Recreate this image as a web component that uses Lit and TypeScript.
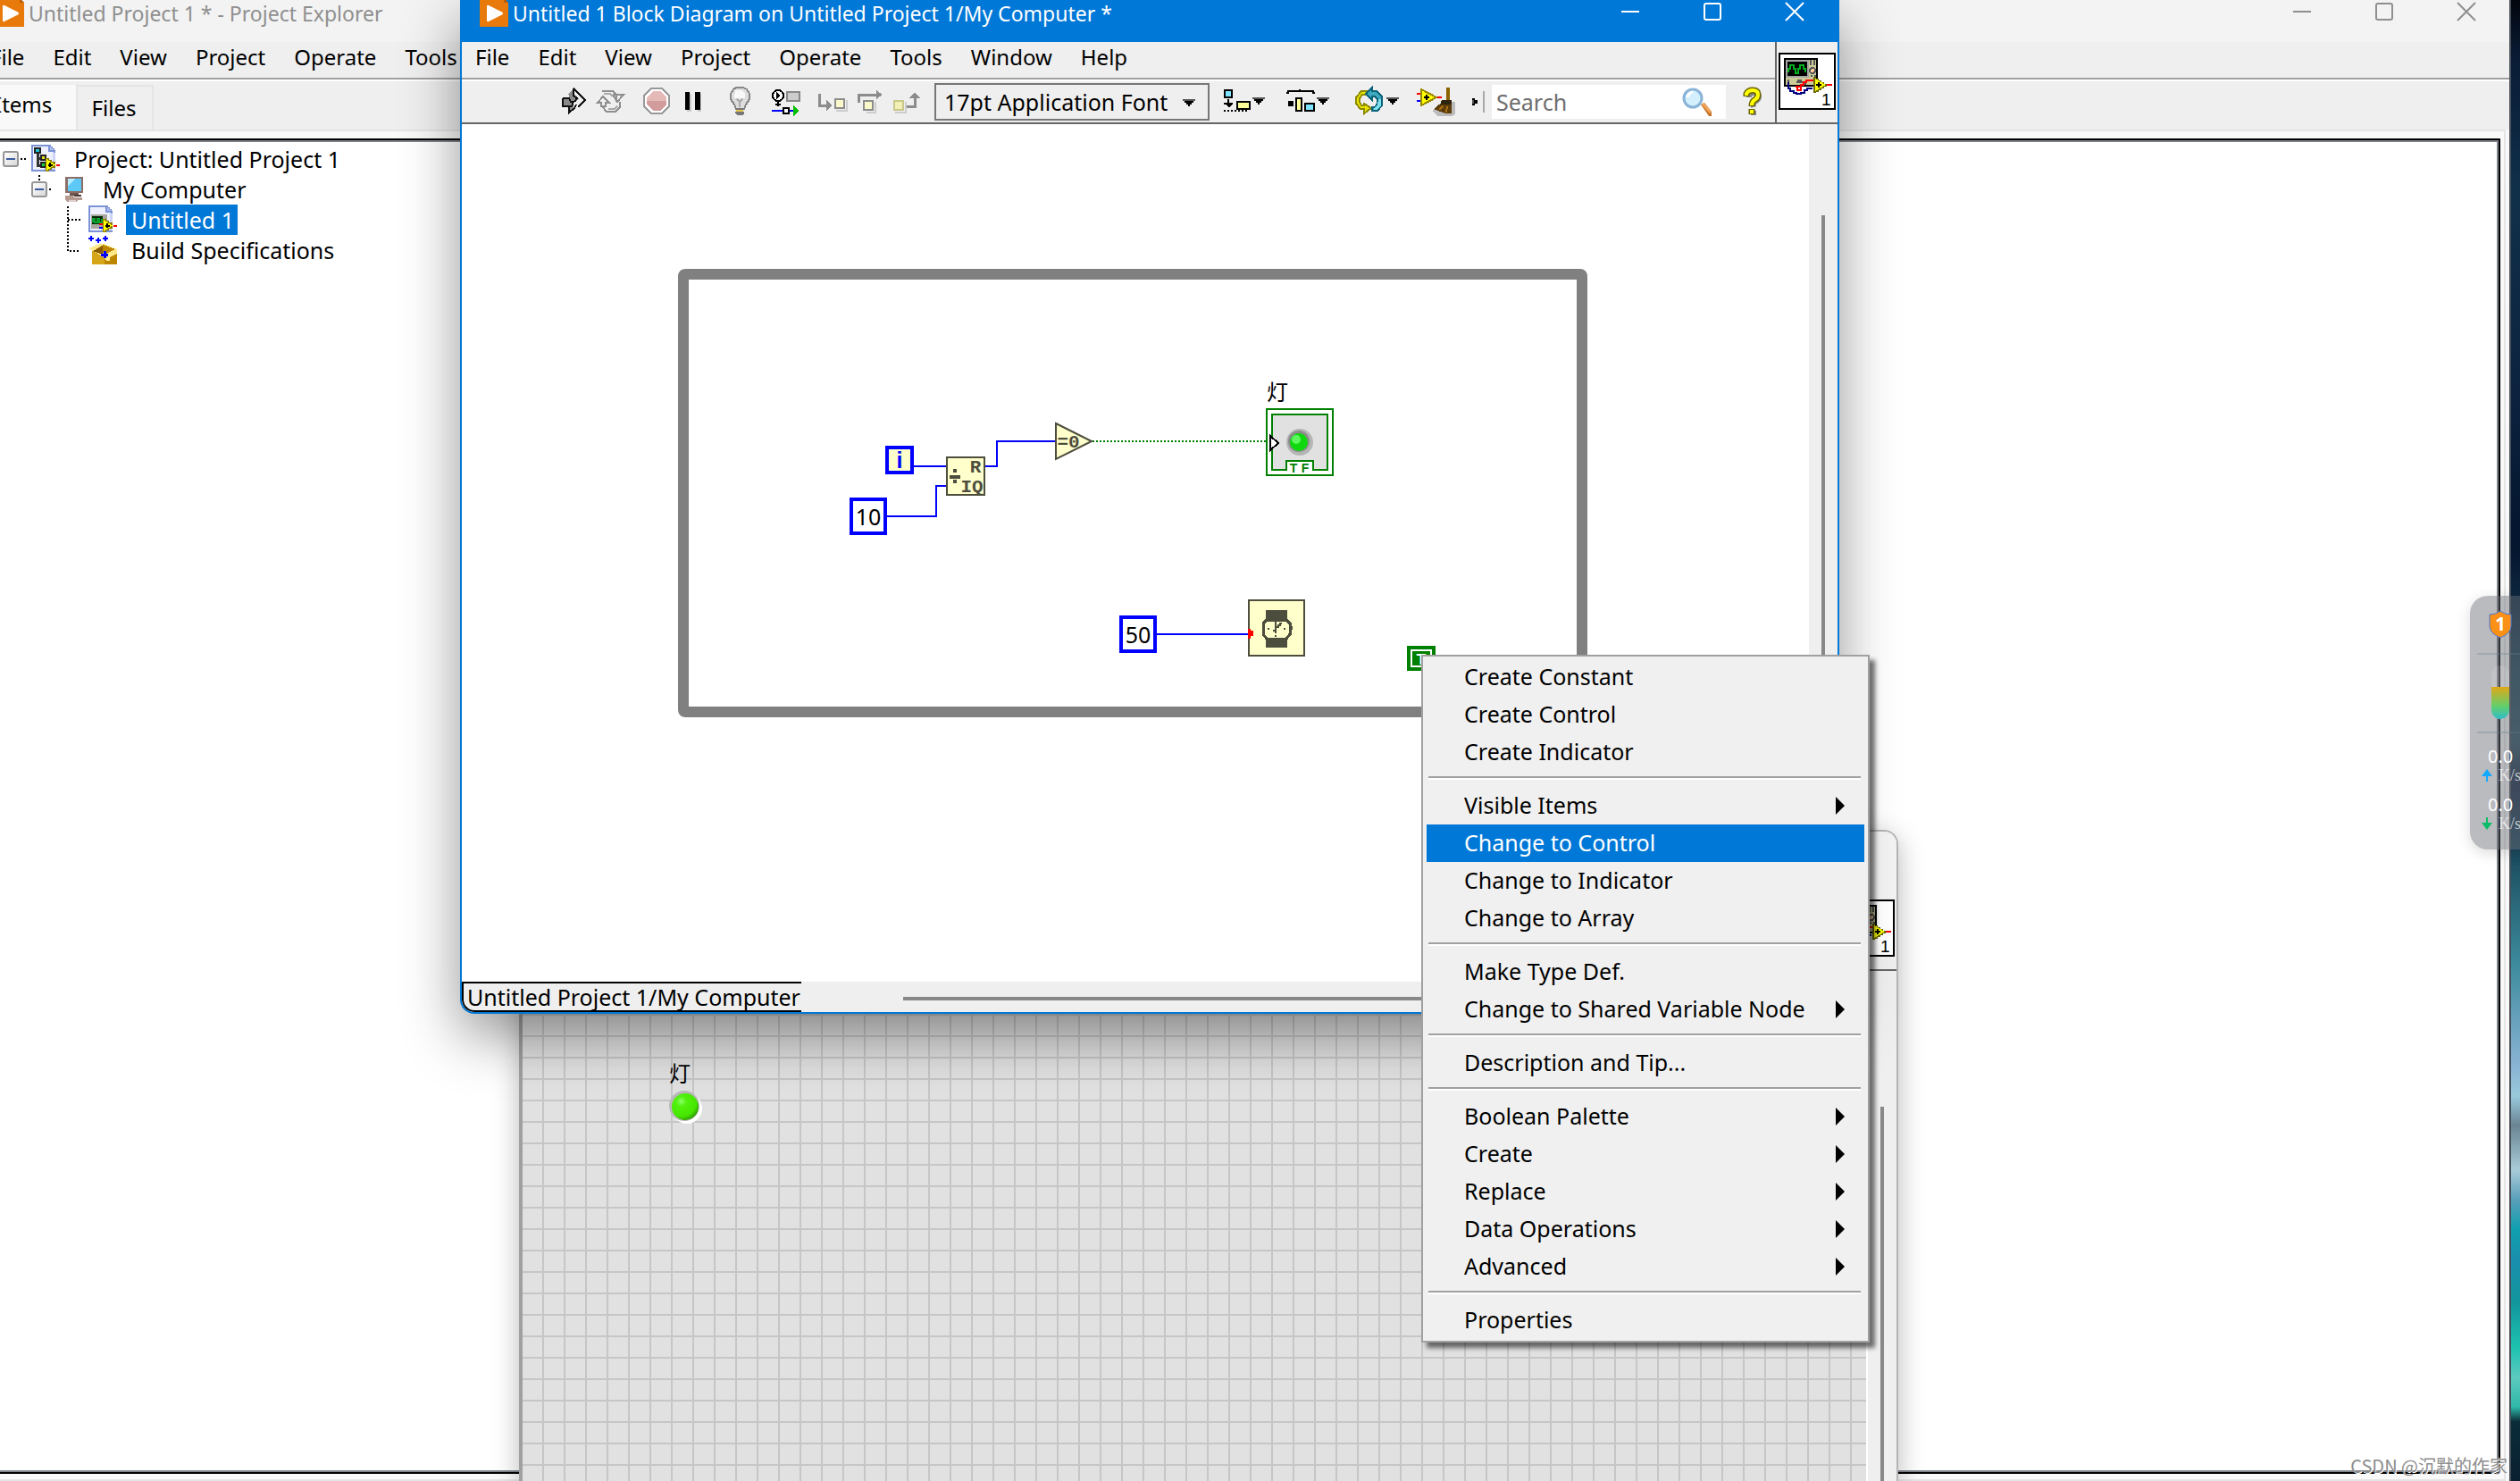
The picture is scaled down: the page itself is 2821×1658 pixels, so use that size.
import { LitElement, html, svg, css, nothing } from "lit";
import { customElement, property } from "lit/decorators.js";

const lvLogo = html`<svg class="logo" width="32" height="32" viewBox="0 0 32 32" aria-hidden="true">
  <path d="M0 0H27L32 5V32H0Z" fill="#e8790b" />
  <path d="M27 0L32 5H27Z" fill="#b85c05" />
  <path d="M8 9Q8 7 10 8L25 15.5Q27 17 25 18.5L10 26Q8 27 8 25Z" fill="#fff" />
</svg>`;

const amp = (x: number, y: number) => svg`
  <path d="M${x} ${y}h3v1.500h3v2h3v2h3v2h3v3h-3v2h-3v2h-3v2h-3v1.500h-3z" fill="#6b6b00" />
  <path d="M${x + 2} ${y + 2}l12 7l-12 7z" fill="#ffff00" />
  <path d="M${x + 3} ${y + 9}h6M${x + 6} ${y + 6}v6" stroke="#000" stroke-width="2" />`;

const viIcon = html`<svg class="vi" width="64" height="64" viewBox="0 0 64 64" shape-rendering="crispEdges" role="img" aria-label="VI icon">
  <rect x="1" y="1" width="62" height="62" fill="#fff" stroke="#000" stroke-width="2" />
  <rect x="7" y="7" width="36" height="30" fill="#cccc99" stroke="#000" stroke-width="2" />
  <rect x="8" y="8" width="26" height="20" fill="#a6a6a6" />
  <rect x="10" y="10" width="22" height="16" fill="#000" />
  <path d="M11 22v-4h2v-4h4v4h2v5h3v-5h2v-4h4v4h2v4" fill="none" stroke="#00b020" stroke-width="2" />
  <path d="M36 8v6M40 8v6M36 26h2M40 26h2M11 30v6M23 30v4M30 32v4" stroke="#555" stroke-width="2" />
  <path d="M20 33h2v-2h3v2h2" stroke="#555" stroke-width="2" fill="none" />
  <circle cx="38" cy="20" r="3" fill="#ffcc99" stroke="#555" stroke-width="2" />
  <path d="M11 33v7h2v3h4v2h3v1h5v-1h4v-3h3v-2h6" fill="none" stroke="#000080" stroke-width="2" />
  <path d="M19 38h2v4h4v-4h-4M25 38v-2h3v-3h3v-2h8" fill="none" stroke="#f00" stroke-width="2" />
  ${amp(39, 27)}
  <path d="M54 36h6" stroke="#f00" stroke-width="2" />
  <text x="48" y="59" font-family="Liberation Sans" font-size="19">1</text>
</svg>`;

const docShape = svg`<path d="M1 1H21V3H23V5H25V7H26V29H1Z" fill="#eef1fd" stroke="#7b93d6" stroke-width="2" />
  <path d="M14 26h11V9" fill="none" stroke="#ccd5f5" stroke-width="3" /><path d="M20 1v6h6" fill="#a9b9ea" stroke="#7b93d6" stroke-width="2" />`;
const miniAmp = svg`<path d="M16 15h4v2h3v2h4v7h-4v2h-3v2h-4z" fill="#8c7d00" /><path d="M17 16l10 6.500l-10 6.500z" fill="#ff0" />
  <path d="M19 23h5M21 20v5" stroke="#000" stroke-width="2" /><path d="M28 23h4" stroke="#f00" stroke-width="2" />`;

const treeIcons: Record<string, unknown> = {
  project: svg`${docShape}<path d="M7 8V23H11M7 15H11" fill="none" stroke="#333" stroke-width="3" />
    <rect x="4" y="4" width="6" height="5" fill="#1ec8d8" stroke="#222" stroke-width="2" />
    <rect x="11" y="12" width="5" height="5" fill="#e8e02a" stroke="#222" stroke-width="2" />
    <rect x="11" y="20" width="5" height="5" fill="#16d13c" stroke="#222" stroke-width="2" />${miniAmp}`,
  computer: svg`<rect x="6" y="2" width="20" height="18" fill="#8d6e66" />
    <rect x="9" y="4" width="15" height="14" fill="#5cc9f7" /><path d="M9 4h8l-8 9z" fill="#b5ecff" />
    <path d="M11 20h10v3h-10z" fill="#6d544e" /><path d="M6 23h8l3 2h8v3h-5l-2 2h-10l-2-3z" fill="#b59a92" />
    <path d="M16 22h8v2h-8z" fill="#4a3733" /><path d="M10 28h8v2h-8z" fill="#e0cfca" />`,
  vi: svg`${docShape}<rect x="3" y="10" width="18" height="16" fill="#a8a8a0" /><rect x="4" y="12" width="12" height="9" fill="#052a05" />
    <path d="M5 19v-4h2v4h3v-4h2v4h3v-4" fill="none" stroke="#0aa030" stroke-width="2" />
    <path d="M12 21h5" stroke="#f00" stroke-width="2" /><path d="M12 25h6" stroke="#00f" stroke-width="2" />${miniAmp}`,
  build: svg`<path d="M3 0v6M0 3h6M11 2v6M8 5h6M19 0v6M16 3h6" stroke="#00f" stroke-width="2.500" />
    <path d="M4 16H32V32H4Z" fill="#d6a51a" /><path d="M18 16H32V32H18Z" fill="#bd8600" />
    <path d="M0 14L12 9L18 9L32 15V20L24 24V28H20L14 22Z" fill="#ffe98a" /><path d="M7 16L17 10L30 15L20 20Z" fill="#bd8600" />
    <path d="M5 17L16 11V21Z" fill="#8a5a00" /><path d="M14 21h8M18 17v8" stroke="#00f" stroke-width="3" />`,
};

const tri = (x: number) => svg`<path d="M${x} 12h14v2h-2v2h-2v2h-2v2h-2v-2h-2v-2h-2v-2h-2z" fill="#000" /><path d="M${x} 12h14v2h-14z" fill="#555" />`;

interface Tool { name: string; w: number; gap: string; art: unknown }
const runTools: Tool[] = [
  { name: "Run", w: 28, gap: "g12", art: svg`<path d="M14 2V8L20 14L14 18V22L10 30V22H1V13H10L8 8Z" fill="#8a8a8a" /><path d="M2 13h7l2 4h3l-2 5h-3v7l6-5l2-4M14 2l13 13l-8 8M14 2v8l4 3l-3 4M2 13v9h6" fill="none" stroke="#111" stroke-width="2" />` },
  { name: "Run Continuously", w: 32, gap: "g20", art: svg`<path d="M6 5h12l4 4v5M18 9h12l-7 8l-5-8M26 17v6l-5 5h-10l-5-6M1 18l6-7l7 7h-4v4h-5v-4z" fill="none" stroke="#8f8f8f" stroke-width="2" /><path d="M8 8h7l3 3M13 25h7l3-3" fill="none" stroke="#aaa" stroke-width="2" />` },
  { name: "Abort Execution", w: 30, gap: "g16", art: svg`<path d="M9 2H21L29 10V22L21 30H9L1 22V10Z" fill="#fff" stroke="#999" stroke-width="2" /><path d="M11 5H19L26 12V20L19 27H11L4 20V12Z" fill="#e6b9b9" /><path d="M4 16h22v4l-7 7h-8l-7-7z" fill="#d29c9c" />` },
  { name: "Pause", w: 18, gap: "g32", art: svg`<path d="M3 8h5v20h-5zM15 8h4v20h-4z" fill="#ccc" /><path d="M1 6h5v20H1zM12 6h6v20h-6z" fill="#000" />` },
  { name: "Highlight Execution", w: 24, gap: "g24", art: svg`<path d="M8 1h8l4 2l3 5v6l-4 6l-2 5h-9l-2-5l-4-6v-6l3-5z" fill="#ddd" stroke="#888" stroke-width="2" /><path d="M7 4h8l3 4v5h-12z" fill="#f8f8f8" /><path d="M9 14l3 3l3-3M12 17v6" fill="none" stroke="#aaa" stroke-width="2" /><path d="M7 24h10v2h-10zM7 28h10v2l-2 2h-6l-2-2z" fill="#777" /><path d="M8 26h8v2h-8z" fill="#e6c64a" />` },
  { name: "Retain Wire Values", w: 32, gap: "g20", art: svg`<circle cx="7" cy="10" r="6" fill="#fff" stroke="#000" stroke-width="2" /><path d="M5 6v8l4-4z" fill="#000" /><path d="M7 16v6M4 20h6" stroke="#000" stroke-width="2" /><path d="M0 27h12M20 27h5" stroke="#00f" stroke-width="2" /><rect x="13" y="24" width="6" height="6" fill="#fff" stroke="#000" stroke-width="2" /><path d="M24 21v12l7-6z" fill="#00c000" /><rect x="17" y="6" width="14" height="10" fill="#ccc" stroke="#888" stroke-width="2" />` },
  { name: "Step Into", w: 32, gap: "g12", art: svg`<path d="M1 8v13h12" fill="none" stroke="#8c8c8c" stroke-width="3" /><path d="M9 15v12l7-6z" fill="#8c8c8c" /><path d="M20 27h12v-12" fill="none" stroke="#ccc" stroke-width="2" /><rect x="19" y="14" width="10" height="10" fill="#f8f8c8" stroke="#8c8c8c" stroke-width="2" />` },
  { name: "Step Over", w: 28, gap: "g12", art: svg`<path d="M1 18V9H22" fill="none" stroke="#8c8c8c" stroke-width="3" /><path d="M21 4v10l7-5z" fill="#8c8c8c" /><path d="M10 29h10v-12" fill="none" stroke="#ccc" stroke-width="2" /><rect x="7" y="16" width="10" height="10" fill="#f8f8c8" stroke="#8c8c8c" stroke-width="2" />` },
  { name: "Step Out", w: 30, gap: "g16", art: svg`<path d="M2 29h12v-12" fill="none" stroke="#ccc" stroke-width="2" /><rect x="1" y="16" width="10" height="10" fill="#f2f0b4" stroke="#c9c78a" stroke-width="2" /><path d="M15 22h9V12" fill="none" stroke="#8c8c8c" stroke-width="3" /><path d="M18 13h12l-6-7z" fill="#8c8c8c" />` },
];
const editTools: Tool[] = [
  { name: "Align Objects", w: 46, gap: "g24", art: svg`<rect x="1" y="4" width="8" height="8" fill="#7ee4ff" stroke="#000" stroke-width="2" /><path d="M5 14v8M0 19h10" stroke="#000" stroke-width="2" /><path d="M2 20h7l-3 4z" fill="#000" /><path d="M0 27h26" stroke="#000" stroke-width="2" stroke-dasharray="2 2" /><rect x="15" y="17" width="14" height="8" fill="#ffff99" stroke="#000" stroke-width="2" />${tri(32)}` },
  { name: "Distribute Objects", w: 48, gap: "g28", art: svg`<path d="M0 7h2v-2h28v2h2M15 5v-2" fill="none" stroke="#000" stroke-width="2" /><rect x="2" y="16" width="6" height="6" fill="#000" /><rect x="11" y="13" width="6" height="14" fill="#ffff99" stroke="#000" stroke-width="2" /><rect x="21" y="19" width="10" height="8" fill="#7ee4ff" stroke="#000" stroke-width="2" />${tri(34)}` },
  { name: "Reorder", w: 50, gap: "g20", art: svg`<path d="M14 5H8L2 12V19L7 25H11V30L19 24L11 19V21H8L6 17V13L9 9H14Z" fill="#e8e400" stroke="#8e8a00" stroke-width="2" /><path d="M20 1V5H25L31 11V21L26 27H20V23H23L26 19V14L23 11H20V15L13 8Z" fill="#3fa9c0" stroke="#0d6478" stroke-width="2" /><path d="M27 14h3v7l-4 5h-4v-2l4-4z" fill="#7ee0ee" />${tri(36)}` },
  { name: "Clean Up Diagram", w: 42, gap: "g20", art: svg`<path d="M0 8h6M22 12h6" stroke="#f00" stroke-width="2" /><path d="M0 16h6" stroke="#00f" stroke-width="2" /><path d="M17 27l12-10h14v14l-4 2h-16z" fill="#bbb" /><path d="M5 3L22 12L5 21Z" fill="#ff0" stroke="#9a8a00" stroke-width="2" /><path d="M8 12h6M11 9v6" stroke="#000" stroke-width="2" /><path d="M33 1h4v14h-4z" fill="#8a6200" /><path d="M28 15h11v5h-13z" fill="#2e2410" /><path d="M24 20h15v10h-7l-13-5z" fill="#5c3c08" /><path d="M29 22l-4 4M34 22l-1 7" stroke="#a87010" stroke-width="2" />` },
  { name: "More Tools", w: 14, gap: "g8", art: svg`<path d="M0 13h3v2h3v4h-3v2h-3z" fill="#000" /><path d="M0 15h2v4h-2z" fill="#555" /><path d="M13 5v24" stroke="#a8a8a8" stroke-width="2" />` },
];

const contextMenu: { label?: string; sub?: boolean; on?: boolean }[] = [
  { label: "Create Constant" }, { label: "Create Control" }, { label: "Create Indicator" }, {},
  { label: "Visible Items", sub: true }, { label: "Change to Control", on: true }, { label: "Change to Indicator" }, { label: "Change to Array" }, {},
  { label: "Make Type Def." }, { label: "Change to Shared Variable Node", sub: true }, {},
  { label: "Description and Tip..." }, {},
  { label: "Boolean Palette", sub: true }, { label: "Create", sub: true }, { label: "Replace", sub: true }, { label: "Data Operations", sub: true }, { label: "Advanced", sub: true }, {},
  { label: "Properties" },
];

const shared = css`
  :host { display: block; font-family: "Noto Sans", "Noto Sans CJK SC", sans-serif; font-size: 24px; color: #000; }
  * { box-sizing: border-box; }
  button, input, select { font: inherit; color: inherit; border: 0; background: none; padding: 0; margin: 0; border-radius: 0; }
  svg { display: block; flex: none; overflow: visible; }
  .menubar { display: flex; gap: 32px; height: 40px; padding: 0 15px 6px; background: #efefef; overflow: hidden; }
  .menubar button { line-height: 34px; white-space: nowrap; }
  .rule { height: 4px; border-top: 2px solid #a0a0a0; background: #fff; }
`;

@customElement("window-title")
class WindowTitle extends LitElement {
  @property() label = "";
  @property({ type: Boolean, reflect: true }) active = false;
  static styles = [shared, css`
    :host { height: 47px; background: #f3f3f3; color: #8f8f8f; }
    :host([active]) { background: #0078d7; color: #fff; }
    .row { display: flex; align-items: flex-start; height: 47px; padding: 0 38px 0 20px; }
    .logo { margin: -2px 5px 0 0; }
    h1 { flex: 1; margin: 0; font-size: 23px; font-weight: 400; line-height: 30px; white-space: nowrap; }
    .controls { display: flex; gap: 72px; padding: 3px 0; }
    .controls button { width: 20px; height: 20px; }
  `];
  render() {
    return html`<div class="row">${lvLogo}<h1>${this.label}</h1>
      <div class="controls">
        <button aria-label="Minimize"><svg width="20" height="20"><path d="M0 10h20" stroke="currentColor" stroke-width="2" /></svg></button>
        <button aria-label="Maximize"><svg width="20" height="20"><rect x="1" y="1" width="18" height="18" rx="2" fill="none" stroke="currentColor" stroke-width="2" /></svg></button>
        <button aria-label="Close"><svg width="20" height="20"><path d="M0 0L20 20M20 0L0 20" stroke="currentColor" stroke-width="2" /></svg></button>
      </div></div>`;
  }
}

@customElement("project-explorer")
class ProjectExplorer extends LitElement {
  static styles = [shared, css`
    :host { background: #f9f9f9; display: flex; flex-direction: column; border-right: 2px solid #4a5058; }
    window-title { margin-left: -5px; }
    .menubar { padding-left: 9px; flex: none; }
    .rule { flex: none; }
    .tabs { display: flex; flex: none; height: 54px; padding-top: 4px; background: #efefef; }
    .tab { height: 50px; line-height: 44px; }
    .items { width: 105px; padding: 0 26px 6px 14px; background: #f9f9f9; text-align: left; line-height: 40px; }
    .files { width: 87px; border: 2px solid #e5e5e5; border-bottom: 0; padding-right: 2px; }
    .page { flex: 1; display: flex; border: 2px solid #e5e5e5; border-width: 2px 2px 2px 0; margin-right: 4px; padding: 8px 4px 6px 0; }
    .tree { flex: 1; background: #fff; border: 2px solid #000; border-left: 0; position: relative; }
    .inner { position: absolute; inset: 0; border: 2px solid #7f838c; border-width: 2px 2px 2px 0; padding: 2px 0 0 20px; }
    ul { list-style: none; margin: 0; padding: 0; }
    ul ul { padding-left: 32px; }
    .node { display: flex; align-items: center; height: 34px; padding-left: 3px; gap: 14px; white-space: nowrap; }
    .toggle { width: 18px; height: 18px; border: 2px solid #969696; border-radius: 3px; background: linear-gradient(135deg, #fff, #d8d8d8); display: grid; place-items: center; }
    .toggle::before { content: ""; width: 10px; height: 2px; background: #3b5a9e; }
    .leaf { padding-left: 35px; }
    .name { margin-left: -4px; padding: 0 6px; font-size: 25px; line-height: 34px; }
    .selected { background: #0078d7; color: #fff; padding: 0 4px 0 6px; }
    .lines { position: absolute; left: 20px; top: 0; }
  `];
  node(icon: string, name: string, toggle: boolean, selected = false) {
    return html`<div class="node ${toggle ? "" : "leaf"}">
      ${toggle ? html`<button class="toggle" aria-label="Collapse ${name}"></button>` : nothing}
      <svg width="32" height="32" viewBox="0 0 32 32" aria-hidden="true" shape-rendering="crispEdges">${treeIcons[icon]}</svg>
      <span class="name ${selected ? "selected" : ""}">${name}</span></div>`;
  }
  render() {
    return html`
      <window-title label="Untitled Project 1 * - Project Explorer"></window-title>
      <nav class="menubar">${["File", "Edit", "View", "Project", "Operate", "Tools"].map(m => html`<button>${m}</button>`)}</nav>
      <div class="rule"></div>
      <div class="tabs" role="tablist"><button class="tab items" role="tab" aria-selected="true">Items</button><button class="tab files" role="tab">Files</button></div>
      <div class="page"><div class="tree"><div class="inner">
        <svg class="lines" width="120" height="140" fill="none" stroke="#000" stroke-width="2" stroke-dasharray="2 2" shape-rendering="crispEdges"><path d="M23 19h6M44 37v6M55 53h4M76 72v50h14M76 87h16" /></svg>
        <ul>
          <li>${this.node("project", "Project: Untitled Project 1", true)}
            <ul><li>${this.node("computer", "My Computer", true)}
              <ul><li>${this.node("vi", "Untitled 1", false, true)}</li><li>${this.node("build", "Build Specifications", false)}</li></ul>
            </li></ul>
          </li>
        </ul></div></div></div>`;
  }
}

@customElement("front-panel")
class FrontPanel extends LitElement {
  static styles = [shared, css`
    :host { display: flex; flex-direction: column; background: #f3f3f3; border: 2px solid #b4b4b4; border-left: 4px solid #a0a0a0; border-bottom: 0; border-radius: 16px 16px 0 0; overflow: hidden; }
    .head { display: flex; justify-content: flex-end; align-items: flex-end; height: 156px; padding: 0 2px 14px; border-bottom: 2px solid #666; background: linear-gradient(#f3f3f3 74px, #efefef 74px); }
    .body { flex: 1; display: flex; background: #efefef; }
    .grid { flex: 1; position: relative; border-right: 2px solid #fff; background-color: #e1e1e1;
      background-image: linear-gradient(90deg, transparent 22px, #c6c6c6 22px), linear-gradient(#c6c6c6 2px, transparent 2px); background-size: 24px 24px; }
    .bar { width: 32px; padding: 152px 0 0 14px; }
    .thumb { width: 4px; height: 100%; background: #888; }
    .lamp { position: absolute; left: 164px; top: 98px; line-height: 34px; }
    .led { margin-top: 2px; }
  `];
  render() {
    return html`<div class="head">${viIcon}</div>
      <div class="body"><div class="grid"><div class="lamp">灯
        <svg class="led" width="38" height="38" viewBox="0 0 38 38" role="img" aria-label="LED on">
          <defs><radialGradient id="g" cx=".35" cy=".3" r=".75"><stop offset="0" stop-color="#8dff6b" /><stop offset=".25" stop-color="#53f20e" /><stop offset=".75" stop-color="#46e600" /><stop offset="1" stop-color="#2c9a00" /></radialGradient></defs>
          <circle cx="20" cy="20" r="17" fill="#fff" /><circle cx="17" cy="17" r="17" fill="#b9b9b9" /><circle cx="18" cy="18" r="15" fill="url(#g)" />
        </svg></div></div>
        <div class="bar"><div class="thumb"></div></div></div>`;
  }
}

@customElement("block-diagram")
class BlockDiagram extends LitElement {
  static styles = [shared, css`
    :host { display: flex; flex-direction: column; background: #efefef; border: 2px solid #0078d7; border-top: 0; border-radius: 0 0 16px 16px; overflow: hidden; }
    .head { display: flex; flex: none; height: 92px; border-bottom: 2px solid #666; }
    .bars { flex: 1; min-width: 0; }
    .cell { border-left: 2px solid #666; padding: 12px 2px 0; }
    .toolbar { display: flex; align-items: center; height: 46px; padding-left: 111px; }
    .toolbar button { flex: none; }
    .g8 { margin-right: 8px; } .g12 { margin-right: 12px; } .g16 { margin-right: 16px; } .g20 { margin-right: 20px; }
    .g24 { margin-right: 24px; } .g28 { margin-right: 28px; } .g32 { margin-right: 32px; }
    .font { position: relative; display: flex; align-items: center; width: 308px; height: 42px; border: 2px solid #777; flex: none; }
    .font select { appearance: none; width: 100%; height: 100%; padding: 0 40px 0 9px; font-size: 25px; outline: 0; }
    .font svg { position: absolute; right: 14px; top: 4px; pointer-events: none; }
    .search { display: flex; align-items: center; width: 262px; height: 38px; background: #fff; padding: 0 16px 0 5px; font-size: 25px; }
    .search input { flex: 1; min-width: 0; outline: 0; }
    .search input::placeholder { color: #6e6e6e; opacity: 1; }
    .mid { flex: 1; display: flex; min-height: 0; }
    .canvas { flex: 1; position: relative; background: #fff; overflow: hidden; }
    .vbar { width: 32px; padding: 102px 0 0 14px; }
    .vbar div { width: 4px; height: 100%; background: #888; }
    .foot { display: flex; flex: none; align-items: center; height: 34px; }
    .path { border: 2px solid #000; border-right: 0; height: 34px; line-height: 30px; font-size: 25px; width: 380px; padding-left: 4px; white-space: nowrap; border-bottom-left-radius: 14px; }
    .hbar { flex: 1; height: 4px; margin: 4px 32px 0 114px; background: #888; }
    .wires, .item { position: absolute; }
    .loop { left: 242px; top: 162px; width: 1018px; height: 502px; border: 12px solid #808080; border-radius: 8px; }
    .num { width: 42px; height: 42px; border: 4px solid #00f; background: #fff; font-size: 25px; line-height: 34px; text-align: center; }
    .ten { left: 434px; top: 418px; } .fifty { left: 736px; top: 550px; }
    .label { left: 901px; top: 283px; line-height: 34px; }
  `];
  tool(t: Tool) {
    return html`<button class="${t.gap}" aria-label=${t.name} title=${t.name}><svg width=${t.w} height="34" viewBox="0 0 ${t.w} 34" shape-rendering="crispEdges">${t.art}</svg></button>`;
  }
  render() {
    return html`
      <window-title active label="Untitled 1 Block Diagram on Untitled Project 1/My Computer *"></window-title>
      <div class="head"><div class="bars">
        <nav class="menubar">${["File", "Edit", "View", "Project", "Operate", "Tools", "Window", "Help"].map(m => html`<button>${m}</button>`)}</nav>
        <div class="rule"></div>
        <div class="toolbar">
          ${runTools.map(t => this.tool(t))}
          <div class="font g16"><select aria-label="Text settings"><option>17pt Application Font</option></select>
            <svg width="14" height="34" shape-rendering="crispEdges">${tri(0)}</svg></div>
          ${editTools.map(t => this.tool(t))}
          <label class="search g20"><input type="search" placeholder="Search" aria-label="Search" />
            <svg width="32" height="32" viewBox="0 0 32 32"><path d="M20 19l4-2l8 10v5h-3z" fill="#c4742c" /><path d="M22 18l9 10" stroke="#f3a65a" stroke-width="3" /><circle cx="11" cy="12" r="10" fill="#d4effd" stroke="#8ab3d8" stroke-width="3" /><path d="M5 11q1-5 6-6" stroke="#fff" stroke-width="3" fill="none" /></svg></label>
          <button aria-label="Context Help"><svg width="20" height="32" viewBox="0 0 20 32" fill="none"><path d="M6 11V8Q8 6 12 6Q17 6 17 10Q17 14 12 16Q10 18 11 22M11 26v5" stroke="#888" stroke-width="6" /><path d="M3 10V7Q5 3 10 3Q16 3 16 8Q16 12 12 14Q9 16 9 21M9 24v6" stroke="#6b6400" stroke-width="7" /><path d="M3 9V7Q5 3 10 3Q16 3 16 8Q16 12 12 14Q9 16 9 20M9 25v4" stroke="#ff0" stroke-width="4" /></svg></button>
        </div></div>
        <div class="cell">${viIcon}</div></div>
      <div class="mid"><div class="canvas">
        <div class="item loop"></div>
        <svg class="wires" width="1100" height="640" shape-rendering="crispEdges" fill="none">
          <g stroke="#00f" stroke-width="2"><path d="M506 383h36M476 439h55v-34h11M586 383h13v-28h66M778 571h104" /></g>
          <path d="M706 355h194" stroke="#008000" stroke-width="2" stroke-dasharray="2 2" />
          <rect x="476" y="362" width="28" height="28" fill="#ffffcc" stroke="#00f" stroke-width="4" />
          <text x="490" y="385" fill="#00f" font-family="Liberation Sans" font-weight="700" font-size="25" text-anchor="middle">i</text>
          <rect x="543" y="373" width="42" height="42" fill="#ffffcc" stroke="#4d4d3d" stroke-width="2" />
          <path d="M546 395h12" stroke="#4d4d3d" stroke-width="4" /><path d="M550 386h4v4h-4zM550 398h4v4h-4z" fill="#4d4d3d" />
          <g fill="#4d4d3d" font-family="Liberation Mono" font-weight="700" font-size="21" text-anchor="middle"><text x="575" y="390">R</text><text x="571" y="412">IQ</text></g>
          <path d="M665 335L705 355L665 375Z" fill="#ffffcc" stroke="#4d4d3d" stroke-width="2" shape-rendering="auto" />
          <text x="679" y="362" fill="#4d4d3d" font-family="Liberation Mono" font-weight="700" font-size="21" text-anchor="middle">=0</text>
          <rect x="901" y="319" width="74" height="74" fill="#fff" stroke="#008000" stroke-width="2" />
          <path d="M907 325h62v62h-16v-10h-30v10h-16z" fill="#e1e1e1" stroke="#008000" stroke-width="2" />
          <g fill="#008000" font-family="Liberation Sans" font-size="14" font-weight="700" text-anchor="middle"><text x="931" y="390">T</text><text x="944" y="390">F</text></g>
          <g shape-rendering="auto"><circle cx="938" cy="356" r="15" fill="#b5b5b5" /><circle cx="937" cy="355" r="12" fill="#8c8c8c" /><circle cx="937" cy="356" r="10" fill="#0fd80f" /><circle cx="934" cy="353" r="5" fill="#5cf75c" /></g>
          <path d="M905 349v16l9-8z" fill="#fff" stroke="#000" stroke-width="2" />
          <rect x="881" y="533" width="62" height="62" fill="#ffffcc" stroke="#4d4d3d" stroke-width="2" />
          <path d="M900 544h24v10h-24zM900 576h24v10h-24zM928 562h2v4h-2z" fill="#4d4d3d" />
          <path d="M901 555h22l4 4v12l-4 5h-22l-4-5v-12z" fill="#ffffcc" stroke="#4d4d3d" stroke-width="3" />
          <path d="M911 556v14M908 567h4M912 563h2v-2h2v-2h2M902 565h2M920 565h2M910 573h2" stroke="#4d4d3d" stroke-width="2" />
          <path d="M880 565h3v2h3v6h-3v3h-3z" fill="#f00" />
          <rect x="1060" y="586" width="28" height="24" fill="#008000" stroke="#008000" stroke-width="4" />
          <rect x="1063" y="589" width="22" height="18" stroke="#fff" stroke-width="2" />
          <text x="1074" y="605" fill="#fff" font-family="Liberation Mono" font-weight="700" font-size="19" text-anchor="middle">T</text>
        </svg>
        <div class="item num ten">10</div><div class="item num fifty">50</div><div class="item label">灯</div>
      </div><div class="vbar"><div></div></div></div>
      <div class="foot"><div class="path">Untitled Project 1/My Computer</div><div class="hbar"></div></div>`;
  }
}

@customElement("shortcut-menu")
class ShortcutMenu extends LitElement {
  static styles = [shared, css`
    :host { background: #f0f0f0; border: 2px solid #a0a0a0; box-shadow: 6px 6px 5px rgba(0, 0, 0, 0.55); padding: 2px 4px; width: 502px; font-size: 25px; }
    .row { display: flex; align-items: center; width: 100%; height: 42px; padding: 0 22px 0 42px; text-align: left; white-space: nowrap; }
    .row span { flex: 1; line-height: 38px; margin-bottom: 3px; }
    .on { background: #0078d7; color: #fff; }
    hr { height: 4px; margin: 6px 4px 8px 2px; border: 0; border-top: 2px solid #a0a0a0; background: #fff; }
  `];
  render() {
    return contextMenu.map(m => m.label
      ? html`<button class="row ${m.on ? "on" : ""}" role="menuitem"><span>${m.label}</span>${m.sub ? html`<svg width="10" height="20"><path d="M0 0L10 10L0 20Z" fill="#000" /></svg>` : nothing}</button>`
      : html`<hr />`);
  }
}

@customElement("net-monitor")
class NetMonitor extends LitElement {
  static styles = [shared, css`
    :host { width: 76px; height: 284px; padding: 16px 0 0 8px; background: rgba(104, 106, 116, 0.46); border-radius: 20px 0 0 20px; box-shadow: 0 4px 16px rgba(0, 0, 0, 0.14); color: #fff; }
    .shield { margin-left: 13px; }
    .line { height: 2px; background: rgba(100, 130, 140, 0.3); }
    .gap { height: 16px; }
    .pill { width: 20px; height: 60px; margin: 12px 0 14px 16px; border-radius: 10px; overflow: hidden; background: rgba(255, 255, 255, 0.12); padding-top: 24px; }
    .fill { height: 36px; background: linear-gradient(#e0a818, #62cf6c 60%, #2fbcc8); }
    .rate { display: grid; grid-template-columns: 19px auto; margin: 12px 0 0 5px; height: 42px; }
    .value { grid-column: 1 / 3; font-size: 20px; line-height: 28px; padding-left: 7px; }
    .unit { font-family: "Liberation Serif", serif; font-size: 18px; line-height: 14px; color: rgba(255, 255, 255, 0.7); }
  `];
  render() {
    const rate = (d: string, c: string) => html`<div class="rate"><span class="value">0.0</span>
      <svg width="12" height="14"><path d=${d} fill=${c} /></svg><span class="unit">K/s</span></div>`;
    return html`<svg class="shield" width="26" height="32" viewBox="0 0 26 32"><path d="M1 5Q8 5 13 1Q18 5 25 5V18Q25 26 13 31Q1 26 1 18Z" fill="#fa9016" stroke="#4a79d8" /><text x="13" y="23" text-anchor="middle" font-size="21" font-weight="700" fill="#fff">1</text></svg>
      <div class="gap"></div><div class="line"></div><div class="pill"><div class="fill"></div></div><div class="line"></div>
      ${rate("M6 0L12 8H7V14H5V8H0Z", "#12a9ff")}${rate("M6 14L12 6H7V0H5V6H0Z", "#0cbc68")}`;
  }
}

@customElement("app-root")
class AppRoot extends LitElement {
  static styles = [shared, css`
    :host { position: relative; height: 100vh; overflow: hidden;
      background: linear-gradient(#02060e, #0a1c36 4%, #10304a 13%, #0d2440 25%, #04152e 37%, #1c4456 45%, #2c5462 50%, #1a2a48 53%, #1c4e60 58%, #3c8a9c 65%, #8ab4d4 72%, #98cadb 74%, #6b8494 76%, #a8ccd8 79%, #5a9fba 81%, #10a0ae 83%, #1a8fae 85%, #12969c 88%, #1ec2b0 91%, #5ccabf 93%, #2fb8a8 95%, #0a2c38 96%, #0a2030); }
    .explorer { position: absolute; left: -20px; right: 10px; top: 0; bottom: 0; }
    .panel { position: absolute; left: 581px; right: 696px; top: 929px; bottom: 0; box-shadow: 0 8px 30px rgba(0, 0, 0, 0.28); }
    .diagram { position: absolute; left: 515px; right: 762px; top: 0; bottom: 523px; box-shadow: 0 24px 64px rgba(0, 0, 0, 0.42); }
    .menu { position: absolute; left: 1591px; top: 733px; }
    .monitor { position: absolute; right: -20px; top: 667px; }
    .mark { position: absolute; right: 14px; bottom: 4px; font: 20px/26px "Noto Sans CJK SC", sans-serif; color: #8c8c8c; text-shadow: 1px 1px 0 #fff; }
  `];
  render() {
    return html`<project-explorer class="explorer"></project-explorer>
      <front-panel class="panel"></front-panel>
      <block-diagram class="diagram"></block-diagram>
      <shortcut-menu class="menu" role="menu"></shortcut-menu>
      <net-monitor class="monitor"></net-monitor>
      <div class="mark">CSDN @沉默的作家</div>`;
  }
}
